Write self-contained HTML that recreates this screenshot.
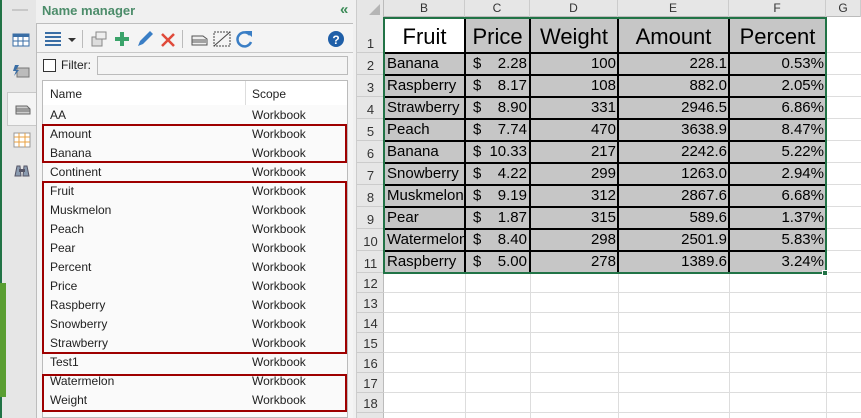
<!DOCTYPE html>
<html><head><style>
*{margin:0;padding:0;box-sizing:border-box}
body{width:861px;height:418px;overflow:hidden;position:relative;background:#fff;font-family:"Liberation Sans",sans-serif;font-size:12px;color:#222}
.a{position:absolute}
.cell{position:absolute;font-size:15px;color:#000;white-space:nowrap;overflow:hidden}
</style></head><body>
<div class="a" style="left:0;top:0;width:36px;height:418px;background:#e6e6e6;border-left:2px solid #217346"></div>
<div class="a" style="left:7px;top:92px;width:30px;height:34px;background:#f4f4f4;border:1px solid #c8c8c8;border-right:none"></div>
<div class="a" style="left:0;top:283px;width:6px;height:114px;background:#5a9e32"></div>
<div class="a" style="left:12px;top:9px;width:16px;height:2px;background:#c8c8c8"></div>
<svg class="a" style="left:12px;top:33px" width="18" height="14"><rect x="1" y="1" width="16" height="12" fill="#fff" stroke="#3a6ea5"/><rect x="1" y="1" width="16" height="3" fill="#3a6ea5"/><path d="M1 8h16M6 4v9M11 4v9" stroke="#3a6ea5"/></svg>
<svg class="a" style="left:12px;top:64px" width="18" height="14"><rect x="5" y="4" width="12" height="9" fill="#bbb" stroke="#777"/><path d="M3 1l4 0-3 5 3 0-5 6 2-5-3 0z" fill="#3a6ea5"/></svg>
<svg class="a" style="left:14px;top:102px" width="18" height="14"><path d="M2 4h11l3 3v5H2z" fill="#ccc" stroke="#666"/><path d="M2 7h14M2 9h14" stroke="#666"/></svg>
<svg class="a" style="left:13px;top:132px" width="18" height="16"><rect x="1" y="1" width="16" height="14" fill="#fff" stroke="#999"/><path d="M6 1v14M12 1v14M1 5h16M1 10h16" stroke="#e8a040"/></svg>
<svg class="a" style="left:13px;top:162px" width="18" height="16"><path d="M2 14l2-10h3l1 10zM10 14l1-10h3l2 10z" fill="#8a9bb0" stroke="#556"/><rect x="6" y="7" width="6" height="3" fill="#556"/></svg>
<div class="a" style="left:36px;top:0;width:320px;height:418px;background:#f0f0f0"></div>
<div class="a" style="left:42px;top:3px;font-size:13px;font-weight:bold;color:#4c8c6a">Name manager</div>
<div class="a" style="left:340px;top:1px;font-size:15px;font-weight:bold;color:#3a8a56">«</div>
<div class="a" style="left:36px;top:23px;width:317px;height:395px;border:1px solid #bdbdbd;border-right:none;border-bottom:none;background:#f4f4f4"></div>
<div class="a" style="left:37px;top:52px;width:316px;height:1px;background:#c8c8c8"></div>
<svg class="a" style="left:44px;top:31px" width="32" height="16"><path d="M1 2h16M1 6h16M1 10h16M1 14h16" stroke="#3a6ea5" stroke-width="2"/><path d="M24 7h8l-4 4z" fill="#333"/></svg>
<div class="a" style="left:82px;top:30px;width:1px;height:18px;background:#bbb"></div>
<svg class="a" style="left:91px;top:31px" width="16" height="16"><rect x="1" y="6" width="10" height="9" fill="#ddd" stroke="#888"/><rect x="5" y="1" width="10" height="7" fill="#eee" stroke="#888"/></svg>
<svg class="a" style="left:114px;top:30px" width="16" height="18"><path d="M8 2v14M1 9h14" stroke="#3aa36a" stroke-width="4"/></svg>
<svg class="a" style="left:136px;top:30px" width="18" height="18"><path d="M2 16l2-5 10-10 3 3-10 10z" fill="#3a7ec5"/></svg>
<svg class="a" style="left:160px;top:32px" width="16" height="16"><path d="M2 2l12 12M14 2L2 14" stroke="#e04a3a" stroke-width="2.5"/></svg>
<div class="a" style="left:182px;top:30px;width:1px;height:18px;background:#bbb"></div>
<svg class="a" style="left:190px;top:31px" width="18" height="16"><path d="M2 5h11l4 3v6H2z" fill="#eee" stroke="#555"/><path d="M2 9h14M2 11h14" stroke="#555"/></svg>
<svg class="a" style="left:213px;top:31px" width="18" height="16"><rect x="1" y="1" width="16" height="14" fill="none" stroke="#444" stroke-dasharray="2 1"/><path d="M1 15L17 1" stroke="#444"/></svg>
<svg class="a" style="left:236px;top:30px" width="18" height="18"><path d="M14 5A7 7 0 1 0 15 12" fill="none" stroke="#3a7ec5" stroke-width="2.5"/><path d="M9 1h7v6z" fill="#3a7ec5"/></svg>
<svg class="a" style="left:328px;top:31px" width="16" height="16"><circle cx="8" cy="8" r="8" fill="#1f5fa8"/><text x="8" y="13" font-size="12" font-weight="bold" fill="#fff" text-anchor="middle" font-family="Liberation Sans">?</text></svg>
<div class="a" style="left:43px;top:59px;width:13px;height:13px;border:1px solid #333;background:#fff"></div>
<div class="a" style="left:61px;top:58px;font-size:12px">Filter:</div>
<div class="a" style="left:97px;top:56px;width:251px;height:19px;border:1px solid #bbb;background:#f4f4f4"></div>
<div class="a" style="left:42px;top:80px;width:306px;height:338px;border:1px solid #bbb;background:#fafafa"></div>
<div class="a" style="left:43px;top:81px;width:304px;height:24px;background:#fff"></div>
<div class="a" style="left:245px;top:81px;width:1px;height:24px;background:#ddd"></div>
<div class="a" style="left:50px;top:87px">Name</div>
<div class="a" style="left:252px;top:87px">Scope</div>
<div id="list"></div>
<div class="a" style="left:42px;top:124px;width:305px;height:39px;border:2px solid #9e0000"></div>
<div class="a" style="left:42px;top:181px;width:305px;height:173px;border:2px solid #9e0000"></div>
<div class="a" style="left:42px;top:374px;width:305px;height:38px;border:2px solid #9e0000"></div>
<div class="a" style="left:356px;top:0;width:1px;height:418px;background:#ccc"></div>
<div class="a" style="left:357px;top:0;width:504px;height:17px;background:#e6e6e6;border-bottom:1px solid #bbb"></div>
<div class="a" style="left:357px;top:0;width:27px;height:418px;background:#e6e6e6;border-right:1px solid #bbb"></div>
<svg class="a" style="left:368px;top:3px" width="13" height="13"><path d="M12 1V12H1z" fill="#b5b5b5"/></svg>
<div id="sheet"></div>
<script>
var names=["AA","Amount","Banana","Continent","Fruit","Muskmelon","Peach","Pear","Percent","Price","Raspberry","Snowberry","Strawberry","Test1","Watermelon","Weight"];
var h="";names.forEach(function(n,i){var y=108+i*19;h+='<div class="a" style="left:50px;top:'+y+'px">'+n+'</div><div class="a" style="left:252px;top:'+y+'px">Workbook</div>';});
document.getElementById("list").innerHTML=h;
var cx=[384,465,530,618,729,826,861],cl=["B","C","D","E","F","G"];
var s="";
for(var i=0;i<6;i++){s+='<div class="a" style="left:'+cx[i]+'px;top:0;width:'+(cx[i+1]-cx[i])+'px;height:17px;border-right:1px solid #ccc;text-align:center;font-size:12px;line-height:17px;color:#333">'+cl[i]+'</div>';}
var ry=[17,53];for(var r=2;r<=11;r++)ry.push(53+(r-1)*22);for(var r=12;r<=19;r++)ry.push(ry[ry.length-1]+20);
for(var r=0;r<18;r++){var y=ry[r],hh=ry[r+1]-ry[r];
s+='<div class="a" style="left:357px;top:'+y+'px;width:27px;height:'+hh+'px;border-bottom:1px solid #ccc;text-align:center;font-size:13px;padding-top:'+(hh-17)+'px;color:#333">'+(r+1)+'</div>';
s+='<div class="a" style="left:384px;top:'+(y+hh-1)+'px;width:477px;height:1px;background:#ddd"></div>';}
for(var i=1;i<7;i++)s+='<div class="a" style="left:'+cx[i]+'px;top:17px;width:1px;height:401px;background:#ddd"></div>';
s+='<div class="a" style="left:384px;top:17px;width:442px;height:256px;background:#c6c6c6"></div>';
s+='<div class="a" style="left:384px;top:17px;width:81px;height:36px;background:#fff"></div>';
var data=[["Banana","2.28","100","228.1","0.53%"],["Raspberry","8.17","108","882.0","2.05%"],["Strawberry","8.90","331","2946.5","6.86%"],["Peach","7.74","470","3638.9","8.47%"],["Banana","10.33","217","2242.6","5.22%"],["Snowberry","4.22","299","1263.0","2.94%"],["Muskmelon","9.19","312","2867.6","6.68%"],["Pear","1.87","315","589.6","1.37%"],["Watermelon","8.40","298","2501.9","5.83%"],["Raspberry","5.00","278","1389.6","3.24%"]];
for(var i=1;i<6;i++)s+='<div class="a" style="left:'+(cx[i]-1)+'px;top:17px;width:2px;height:256px;background:#000"></div>';
for(var r=1;r<=10;r++)s+='<div class="a" style="left:384px;top:'+(ry[r]-1)+'px;width:442px;height:2px;background:#000"></div>';
var hd=["Fruit","Price","Weight","Amount","Percent"];
for(var i=0;i<5;i++)s+='<div class="cell" style="left:'+cx[i]+'px;top:24px;width:'+(cx[i+1]-cx[i])+'px;text-align:center;font-size:22px">'+hd[i]+'</div>';
data.forEach(function(d,r){var y=ry[r+1]+2;
s+='<div class="cell" style="left:387px;top:'+y+'px;width:77px">'+d[0]+'</div>';
s+='<div class="cell" style="left:473px;top:'+y+'px">$</div>';
s+='<div class="cell" style="left:480px;top:'+y+'px;width:47px;text-align:right">'+d[1]+'</div>';
s+='<div class="cell" style="left:530px;top:'+y+'px;width:86px;text-align:right">'+d[2]+'</div>';
s+='<div class="cell" style="left:618px;top:'+y+'px;width:109px;text-align:right">'+d[3]+'</div>';
s+='<div class="cell" style="left:729px;top:'+y+'px;width:95px;text-align:right">'+d[4]+'</div>';});
s+='<div class="a" style="left:383px;top:17px;width:444px;height:257px;border:2px solid #217346"></div>';
s+='<div class="a" style="left:822px;top:270px;width:6px;height:6px;background:#217346;border:1px solid #fff"></div>';
document.getElementById("sheet").innerHTML=s;
</script>
</body></html>
